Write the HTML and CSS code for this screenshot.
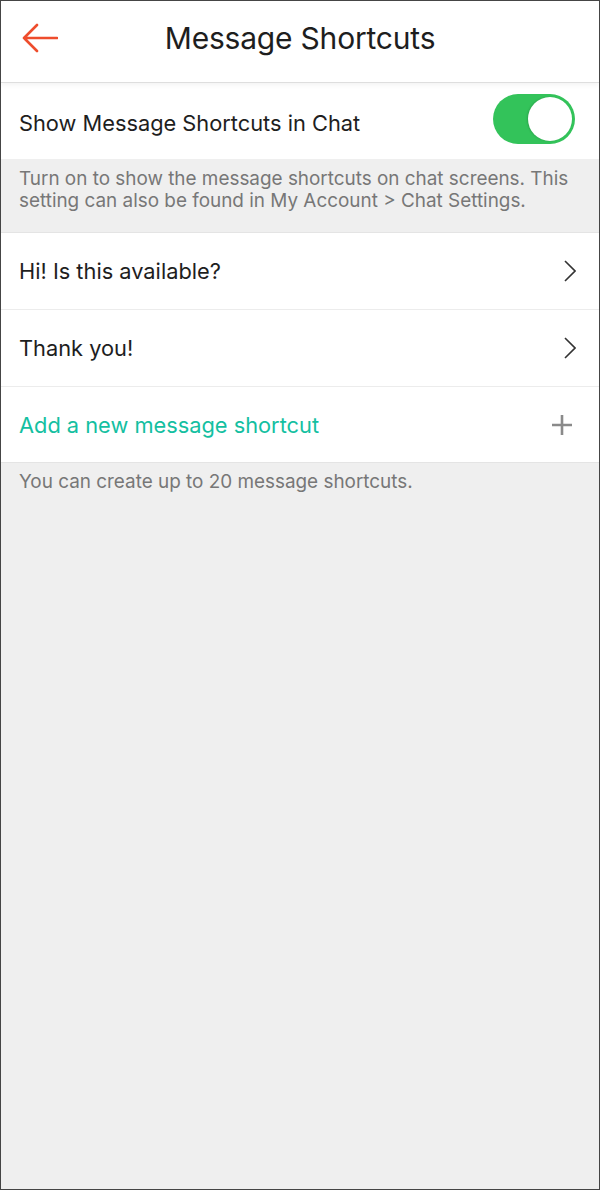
FILE: index.html
```html
<!DOCTYPE html>
<html lang="en">
<head>
<meta charset="utf-8">
<title>Message Shortcuts</title>
<link rel="stylesheet" href="styles.css">
</head>
<body>
<div class="app">
  <header class="header">
    <button class="back" aria-label="Back">
      <svg width="36" height="30" viewBox="0 0 36 30"><path d="M2 15 H35 M15 2 L2 15 L15 28" fill="none" stroke="#ee4d2d" stroke-width="2.6" stroke-linecap="round" stroke-linejoin="round"/></svg>
    </button>
    <h1 class="title">Message Shortcuts</h1>
  </header>
  <div class="row toggle-row">
    <span class="label">Show Message Shortcuts in Chat</span>
    <span class="switch"><span class="knob"></span></span>
  </div>
  <p class="info">Turn on to show the message shortcuts on chat screens. This setting can also be found in My Account &gt; Chat Settings.</p>
  <ul class="list">
    <li class="row item">
      <span class="label">Hi! Is this available?</span>
      <svg class="chev" width="12" height="22" viewBox="0 0 12 22"><path d="M1 1 L11 11 L1 21" fill="none" stroke="#333" stroke-width="1.6"/></svg>
    </li>
    <li class="row item">
      <span class="label">Thank you!</span>
      <svg class="chev" width="12" height="22" viewBox="0 0 12 22"><path d="M1 1 L11 11 L1 21" fill="none" stroke="#333" stroke-width="1.6"/></svg>
    </li>
    <li class="row item add">
      <span class="label add-label">Add a new message shortcut</span>
      <svg class="plus" width="22" height="22" viewBox="0 0 22 22"><path d="M11 1 V21 M1 11 H21" fill="none" stroke="#8a8a8a" stroke-width="2.6"/></svg>
    </li>
  </ul>
  <p class="note">You can create up to 20 message shortcuts.</p>
</div>
</body>
</html>
```
FILE: styles.css
```css
* { box-sizing: border-box; }
html, body { margin: 0; padding: 0; }
body { font-family: Inter, "Liberation Sans", Arial, sans-serif; }
.app {
  width: 600px;
  height: 1190px;
  border: 1px solid #454545;
  background: #efefef;
  display: flex;
  flex-direction: column;
  overflow: hidden;
}
.header {
  height: 82px;
  flex: none;
  background: #fff;
  border-bottom: 1px solid #dedede;
  display: flex;
  align-items: center;
  justify-content: center;
  position: relative;
  box-shadow: 0 2px 5px rgba(0,0,0,0.05);
  z-index: 1;
}
.back {
  position: absolute;
  left: 21px;
  top: 22px;
  background: none;
  border: 0;
  padding: 0;
  display: flex;
}
.title {
  margin: 0;
  margin-top: -7px;
  font-weight: 400;
  font-size: 30px;
  letter-spacing: -0.2px;
  color: #1e1e1e;
}
.row {
  background: #fff;
  display: flex;
  align-items: center;
  justify-content: space-between;
  padding: 0 23px 0 18px;
}
.label { font-size: 21.8px; color: #1e1e1e; }
.toggle-row {
  height: 76px;
  flex: none;
  padding-right: 24px;
  padding-top: 4px;
}
.switch {
  width: 82px;
  height: 50px;
  border-radius: 25px;
  background: #33c35a;
  display: flex;
  align-items: center;
  justify-content: flex-end;
  padding-right: 3px;
  margin-top: -8px;
}
.knob {
  width: 44px;
  height: 44px;
  border-radius: 50%;
  background: #fff;
  box-shadow: -1px 0 2px rgba(0,0,0,0.15);
}
.info {
  margin: 0;
  padding: 9px 18px 20px;
  font-size: 18.9px;
  line-height: 22px;
  color: #777;
  border-bottom: 1px solid #e4e4e4;
  flex: none;
}
.list { list-style: none; margin: 0; padding: 0; flex: none; }
.item { height: 77px; border-bottom: 1px solid #ececec; }
.item.add { height: 76px; border-bottom-color: #e4e4e4; padding-right: 26px; }
.add-label { color: #14bfa1; }
.note {
  margin: 0;
  padding: 8px 18px;
  font-size: 18.9px;
  line-height: 22px;
  color: #777;
}
```
